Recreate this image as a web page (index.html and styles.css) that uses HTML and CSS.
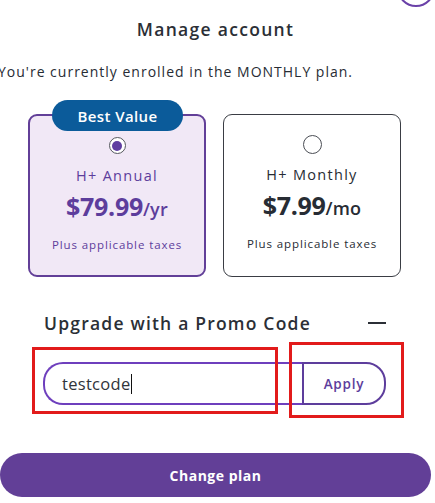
FILE: index.html
```html
<!DOCTYPE html>
<html lang="en">
<head>
<meta charset="utf-8">
<title>Manage account</title>
<link rel="stylesheet" href="styles.css">
</head>
<body>
<div class="page">
  <span class="close-ring" aria-hidden="true"></span>
  <h1 class="title">Manage account</h1>
  <p class="enrolled">You're currently enrolled in the MONTHLY plan.</p>

  <div class="plans">
    <div class="plan plan-selected">
      <span class="badge">Best Value</span>
      <span class="radio radio-on"><span class="dot"></span></span>
      <div class="plan-name">H+ Annual</div>
      <div class="plan-price"><span class="amount">$79.99</span><span class="per">/yr</span></div>
      <div class="plan-tax">Plus applicable taxes</div>
    </div>
    <div class="plan">
      <span class="radio"></span>
      <div class="plan-name">H+ Monthly</div>
      <div class="plan-price"><span class="amount">$7.99</span><span class="per">/mo</span></div>
      <div class="plan-tax">Plus applicable taxes</div>
    </div>
  </div>

  <div class="promo">
    <div class="promo-head">
      <span class="promo-title">Upgrade with a Promo Code</span>
      <span class="promo-toggle"></span>
    </div>
    <div class="promo-row">
      <div class="promo-input">testcode<span class="caret"></span></div>
      <button class="promo-apply">Apply</button>
      <span class="mark mark-input"></span>
      <span class="mark mark-apply"></span>
    </div>
  </div>

  <button class="cta">Change plan</button>
</div>
</body>
</html>
```

FILE: styles.css
```css
* { box-sizing: border-box; }
html, body { margin: 0; padding: 0; background: #fff; }
body {
  font-family: "Open Sans", "Liberation Sans", sans-serif;
  color: #272c34;
  width: 435px;
  height: 503px;
  overflow: hidden;
}
.page {
  position: relative;
  width: 431px;
  display: flex;
  flex-direction: column;
}
.close-ring {
  position: absolute;
  left: 397px;
  top: -31px;
  width: 38px;
  height: 38px;
  border: 2px solid #6a41a8;
  border-radius: 50%;
}
.title {
  margin: 17px 0 0;
  text-align: center;
  font-size: 17.5px;
  font-weight: 600;
  letter-spacing: 1.3px;
  line-height: 24px;
  color: #2b2f36;
}
.enrolled {
  margin: 22px 0 0 -2px;
  font-size: 14px;
  line-height: 18px;
  letter-spacing: 1px;
  white-space: nowrap;
  color: #272c34;
}
.plans {
  display: flex;
  gap: 17px;
  margin: 33px 0 0 28px;
}
.plan {
  position: relative;
  width: 178px;
  height: 163px;
  border: 1px solid #3a3d44;
  border-radius: 9px;
  background: #fff;
  display: flex;
  flex-direction: column;
  align-items: center;
  padding-top: 20px;
  color: #272c34;
}
.plan-selected {
  border: 2px solid #623f98;
  background: #f1e8f6;
  color: #5d3d9c;
}
.badge {
  position: absolute;
  top: -16px;
  left: 22px;
  width: 131px;
  height: 31px;
  border-radius: 16px;
  background: #0b5b9a;
  color: #fff;
  font-size: 15px;
  font-weight: 600;
  letter-spacing: 0.4px;
  display: flex;
  align-items: center;
  justify-content: center;
}
.radio {
  width: 19px;
  height: 19px;
  border-radius: 50%;
  border: 1px solid #4b4e55;
  background: #fff;
  display: flex;
  align-items: center;
  justify-content: center;
}
.radio-on { width: 17px; height: 17px; margin-top: 1px; margin-bottom: 1px; border-color: #55585e; }
.dot { width: 10px; height: 10px; border-radius: 50%; background: #5f3ea1; }
.plan-name {
  margin-top: 11px;
  font-size: 14.5px;
  line-height: 20px;
  letter-spacing: 1.3px;
}
.plan-price {
  margin-top: 5px;
  line-height: 30px;
  display: flex;
  align-items: baseline;
}
.amount { font-size: 25px; font-weight: 700; letter-spacing: -0.3px; }
.per { font-size: 18px; font-weight: 600; letter-spacing: 0.2px; }
.plan-tax {
  margin-top: 13px;
  font-size: 11.5px;
  line-height: 16px;
  letter-spacing: 0.9px;
}
.promo {
  margin: 34px 0 0 44px;
  width: 342px;
}
.promo-head {
  display: flex;
  justify-content: space-between;
  align-items: center;
  height: 24px;
}
.promo-title {
  font-size: 17.5px;
  font-weight: 600;
  letter-spacing: 1.2px;
  color: #2b2f36;
}
.promo-toggle {
  width: 18px;
  height: 2px;
  background: #2b2f36;
}
.promo-row {
  position: relative;
  display: flex;
  margin-top: 27px;
  margin-left: -1px;
  height: 43px;
}
.promo-input {
  flex: 0 0 259px;
  border: 2px solid #6e3fbd;
  border-right: none;
  border-radius: 20px 0 0 20px;
  padding-left: 17px;
  display: flex;
  align-items: center;
  font-size: 16.5px;
  letter-spacing: 0.3px;
  color: #30343b;
}
.caret {
  width: 1px;
  height: 20px;
  background: #111;
  margin-left: 1px;
}
.promo-apply {
  flex: 0 0 84px;
  border: 2px solid #5d3d9c;
  border-radius: 0 20px 20px 0;
  background: #fff;
  font-family: inherit;
  font-size: 13.5px;
  font-weight: 600;
  letter-spacing: 0.8px;
  color: #5d3d9c;
  padding: 0;
}
.mark {
  position: absolute;
  border: 3px solid #e21b1b;
}
.mark-input { left: -11px; top: -15px; width: 246px; height: 67px; }
.mark-apply { left: 246px; top: -20px; width: 115px; height: 76px; }
.cta {
  margin-top: 48px;
  height: 44px;
  width: 431px;
  border: none;
  border-radius: 22px;
  background: #623f97;
  color: #fff;
  font-family: inherit;
  font-size: 14px;
  font-weight: 700;
  letter-spacing: 0.5px;
}
```
